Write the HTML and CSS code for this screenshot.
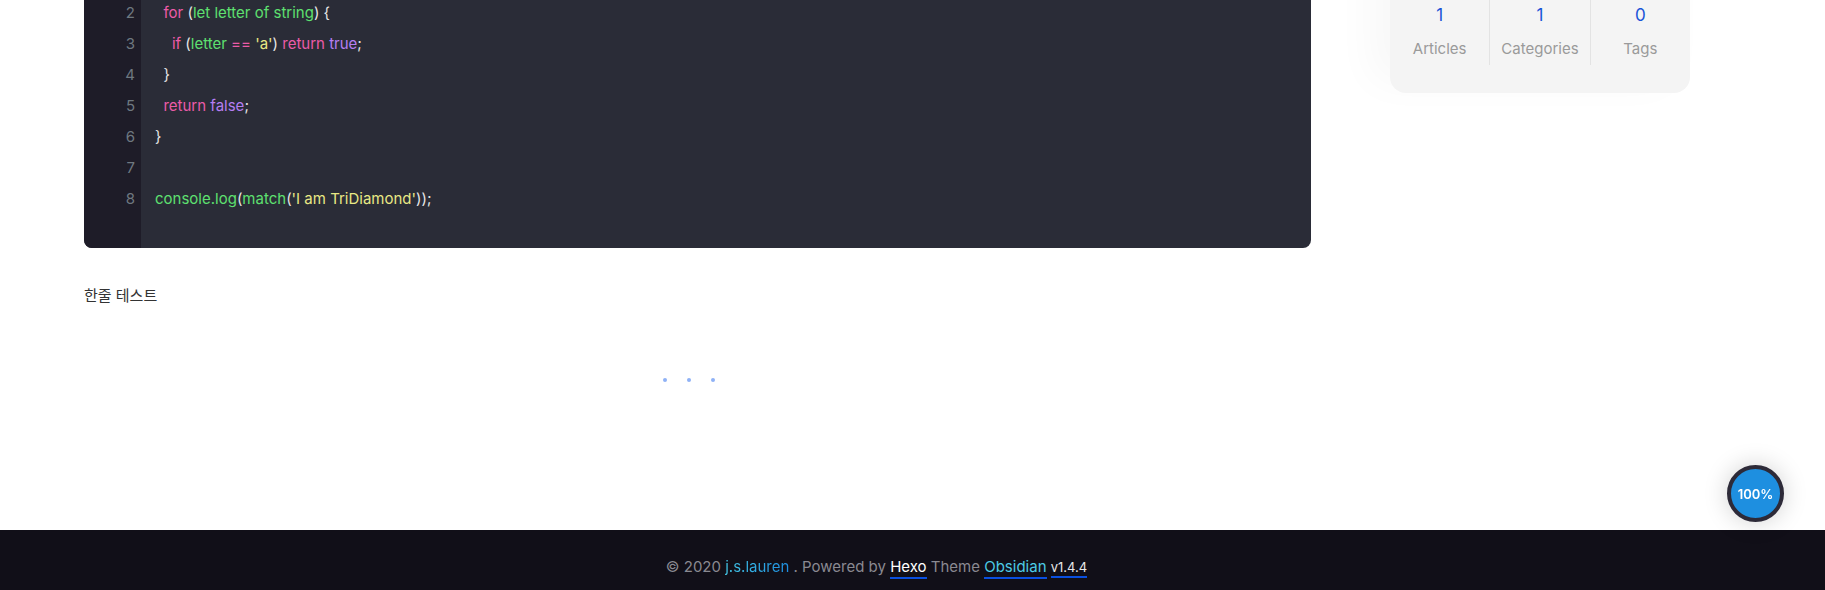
FILE: index.html
```html
<!DOCTYPE html>
<html lang="ko">
<head>
    <meta charset="UTF-8">
    <meta name="viewport" content="width=device-width, initial-scale=1.0">
    <title>한줄 테스트 | j.s.lauren</title>
    <link rel="stylesheet" href="styles.css">
</head>
<body>

<div class="layout">
    <main class="article">
        <!-- Code block -->
        <figure class="highlight">
            <div class="gutter">
                <span>1</span><span>2</span><span>3</span><span>4</span>
                <span>5</span><span>6</span><span>7</span><span>8</span>
            </div>
            <div class="code">
                <span class="line"><span class="kw">function</span> <span class="fn">match</span>(<span class="gr">string</span>) {</span>
                <span class="line">  <span class="kw">for</span> (<span class="gr">let letter of string</span>) {</span>
                <span class="line">    <span class="kw">if</span> (<span class="gr">letter</span> <span class="kw">==</span> <span class="str">'a'</span>) <span class="kw">return</span> <span class="lit">true</span>;</span>
                <span class="line">  }</span>
                <span class="line">  <span class="kw">return</span> <span class="lit">false</span>;</span>
                <span class="line">}</span>
                <span class="line"> </span>
                <span class="line"><span class="gr">console.log</span>(<span class="gr">match</span>(<span class="str">'I am TriDiamond'</span>));</span>
            </div>
        </figure>

        <p class="text">한줄 테스트</p>

        <!-- Loading dots -->
        <div class="loader">
            <span></span><span></span><span></span>
        </div>
    </main>

    <aside class="sidebar">
        <div class="profile-card">
            <div class="stats">
                <div class="stat">
                    <span class="num">1</span>
                    <span class="label">Articles</span>
                </div>
                <div class="stat">
                    <span class="num">1</span>
                    <span class="label">Categories</span>
                </div>
                <div class="stat">
                    <span class="num">0</span>
                    <span class="label">Tags</span>
                </div>
            </div>
        </div>
    </aside>
</div>

<footer class="footer">
    <p>
        © 2020 <a class="author" href="#">j.s.lauren</a> . Powered by
        <a class="link" href="#">Hexo</a> Theme
        <a class="link theme" href="#">Obsidian</a>
        <a class="link version" href="#">v1.4.4</a>
    </p>
</footer>

<div class="progress">100%</div>

</body>
</html>
```

FILE: styles.css
```css
body {
    margin: 0;
    font-family: Inter, "Noto Sans CJK KR", sans-serif;
    background: #fff;
    color: #333;
}
.layout {
    display: flex;
    gap: 79px;
    padding-left: 84px;
    height: 530px;
    overflow: hidden;
}
.article {
    width: 1227px;
    flex-shrink: 0;
}
.highlight {
    display: flex;
    margin: -50px 0 0;
    padding: 0;
    background: #2a2c37;
    border-radius: 8px;
    overflow: hidden;
    font-size: 15px;
    line-height: 31px;
}
.gutter {
    width: 51px;
    padding: 16px 6px 34px 0;
    background: #1e1c28;
    color: #6e7880;
    text-align: right;
}
.gutter span {
    display: block;
}
.code {
    flex: 1;
    padding: 16px 0 34px 14px;
    color: #e6e6e6;
}
.code .line {
    display: block;
    height: 31px;
    white-space: pre;
}
.kw { color: #ec5ba8; }
.gr, .fn { color: #5ee070; }
.lit { color: #b47ef2; }
.str { color: #e8e884; }

.text {
    margin: 35px 0 0;
    font-family: "Noto Sans CJK KR", sans-serif;
    font-size: 15px;
    line-height: 24px;
    color: #333;
}
.loader {
    display: flex;
    justify-content: center;
    gap: 20px;
    padding-right: 17px;
    margin-top: 71px;
}
.loader span {
    width: 4px;
    height: 4px;
    border-radius: 50%;
    background: #8fb2f6;
}

.sidebar {
    width: 300px;
}
.profile-card {
    margin-top: -200px;
    padding: 200px 0 28px;
    background: #f4f4f4;
    border-radius: 16px;
    box-shadow: -20px -10px 40px rgba(0, 0, 0, 0.03);
}
.stats {
    display: flex;
}
.stat {
    flex: 1;
    display: flex;
    flex-direction: column;
    align-items: center;
    gap: 10px;
    padding: 3px 0 4px;
    border-left: 1px solid #e3e3e3;
}
.stat:first-child {
    border-left: none;
}
.num {
    font-size: 17px;
    line-height: 24px;
    color: #1a53d8;
}
.label {
    font-size: 15px;
    line-height: 24px;
    color: #9a9a9a;
}

.footer {
    height: 60px;
    background: #110f18;
    box-sizing: border-box;
    text-align: center;
    padding-right: 72px;
}
.footer p {
    margin: 0;
    padding-top: 25px;
    font-size: 15px;
    line-height: 24px;
    color: #8a8991;
}
.footer a {
    text-decoration: none;
}
.author {
    background: linear-gradient(90deg, #43c6e6, #1d8ee0);
    -webkit-background-clip: text;
    background-clip: text;
    color: transparent;
}
.link {
    color: #fff;
    border-bottom: 2px solid #0a4fe0;
    padding-bottom: 1px;
}
.theme {
    color: #4ccbe6;
}
.version {
    font-size: 13px;
    color: #e8e8e8;
}
.progress {
    position: fixed;
    right: 41px;
    bottom: 68px;
    width: 49px;
    height: 49px;
    border: 4px solid #2d2a38;
    border-radius: 50%;
    background: #1e8fe0;
    color: #fff;
    font-size: 13px;
    font-weight: 600;
    display: flex;
    align-items: center;
    justify-content: center;
    box-shadow: 0 0 24px rgba(0, 0, 0, 0.18);
}
```
